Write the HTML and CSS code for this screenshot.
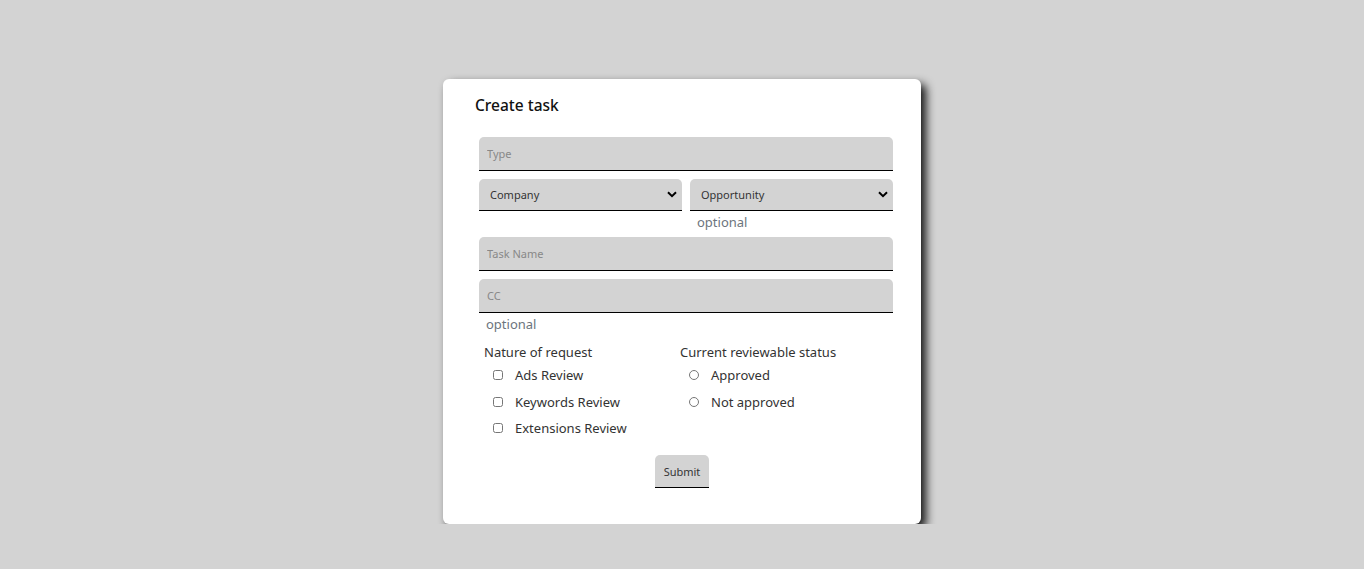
FILE: index.html
```html
<!DOCTYPE html>
<html lang="en">
  <head>
    <meta charset="UTF-8" />
    <meta name="viewport" content="width=device-width, initial-scale=1.0" />
    <title>Create task</title>
    <link rel="stylesheet" href="styles.css">
  </head>
  <body>
    <div class="card">
      <h2 class="card-title">Create task</h2>
      <form class="task-form">
        <input class="field" type="text" placeholder="Type" />

        <div class="field-row">
          <div class="field-col">
            <select class="field select">
              <option>Company</option>
            </select>
          </div>
          <div class="field-col">
            <select class="field select">
              <option>Opportunity</option>
            </select>
            <small class="hint">optional</small>
          </div>
        </div>

        <input class="field" type="text" placeholder="Task Name" />

        <div>
          <input class="field" type="text" placeholder="CC" />
          <small class="hint">optional</small>
        </div>

        <div class="options">
          <div class="option-group">
            <p class="group-label">Nature of request</p>
            <label class="option"><input type="checkbox" /> <span>Ads Review</span></label>
            <label class="option"><input type="checkbox" /> <span>Keywords Review</span></label>
            <label class="option"><input type="checkbox" /> <span>Extensions Review</span></label>
          </div>
          <div class="option-group">
            <p class="group-label">Current reviewable status</p>
            <label class="option"><input type="radio" name="status" /> <span>Approved</span></label>
            <label class="option"><input type="radio" name="status" /> <span>Not approved</span></label>
          </div>
        </div>

        <div class="actions">
          <button type="button" class="submit-btn">Submit</button>
        </div>
      </form>
    </div>
  </body>
</html>
```

FILE: styles.css
```css
body {
  font-family: "Noto Sans", "Open Sans", sans-serif;
  background-color: #d3d3d3;
  margin: 0;
  padding: 0;
}
.card {
  width: 478px;
  box-sizing: border-box;
  margin: 79px auto 0;
  padding: 14px 28px 36px 32px;
  background: white;
  border-radius: 6px;
  box-shadow: 5px 5px 10px rgba(0, 0, 0, 0.9);
}
.card-title {
  margin: 0 0 20px;
  font-size: 15.5px;
  font-weight: 500;
  line-height: 24px;
  color: #111;
}
.task-form {
  margin-left: 4px;
  display: flex;
  flex-direction: column;
  gap: 8px;
}
.field {
  display: block;
  width: 100%;
  box-sizing: border-box;
  height: 34px;
  padding: 0 8px;
  border: none;
  border-bottom: 1px solid #000;
  border-radius: 5px 5px 0 0;
  background: #d3d3d3;
  font-family: inherit;
  font-size: 11px;
  color: #333;
  outline: none;
}
.field::placeholder {
  color: #888;
}
.select {
  height: 32px;
  padding: 0 11px;
  appearance: none;
  background-image: url("data:image/svg+xml,%3Csvg xmlns='http://www.w3.org/2000/svg' width='10' height='7' viewBox='0 0 10 7'%3E%3Cpath d='M1 1.2l4 4 4-4' fill='none' stroke='%23000' stroke-width='2'/%3E%3C/svg%3E");
  background-repeat: no-repeat;
  background-position: right 5px center;
  color: #333;
}
.field-row {
  display: flex;
  gap: 8px;
}
.field-col {
  flex: 1;
}
.hint {
  display: block;
  margin: 4px 0 0 7px;
  font-size: 13px;
  line-height: 14px;
  color: #6c757d;
}
.options {
  display: flex;
  margin-top: 4px;
  padding-left: 5px;
}
.option-group {
  width: 196px;
}
.group-label {
  margin: 0 0 1px;
  font-size: 13px;
  line-height: 18px;
  color: #333;
}
.option {
  display: flex;
  align-items: center;
  height: 26.5px;
  padding-left: 9px;
  font-size: 13px;
  color: #333;
}
.option input {
  width: 10px;
  height: 10px;
  margin: 0 12px 0 0;
}
.actions {
  display: flex;
  justify-content: center;
  margin: 5.5px 0 0 -8px;
}
.submit-btn {
  height: 33px;
  padding: 0 9px;
  border: none;
  border-bottom: 1px solid #000;
  border-radius: 5px 5px 0 0;
  background: #d3d3d3;
  font-family: inherit;
  font-size: 11px;
  color: #333;
  cursor: pointer;
}
```
